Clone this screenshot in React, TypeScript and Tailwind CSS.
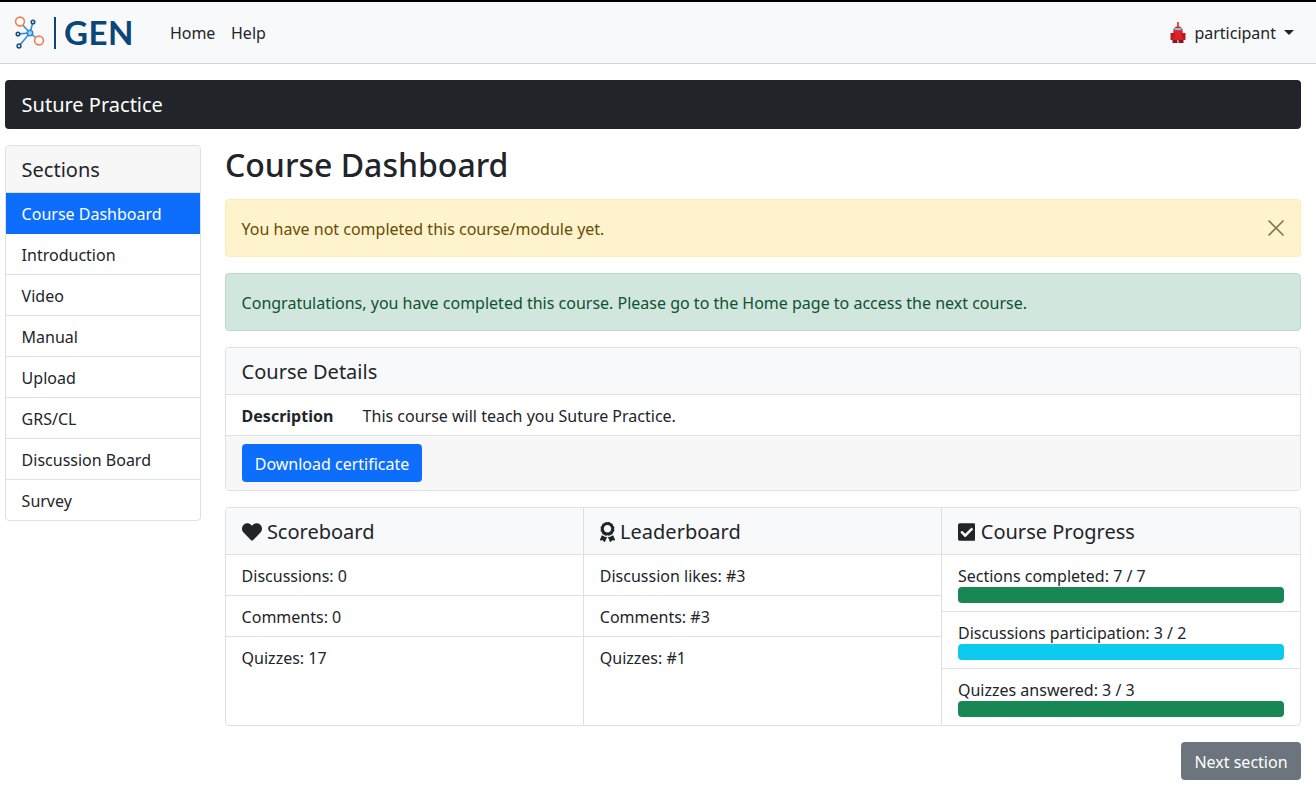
// Course dashboard page

import React from 'react';
import { FaAward, FaCheckSquare, FaHeart } from 'react-icons/fa';

const sections = ['Course Dashboard', 'Introduction', 'Video', 'Manual', 'Upload', 'GRS/CL', 'Discussion Board', 'Survey'];

const Logo: React.FC = () => (
  <div className="flex items-center">
    <svg width="32" height="34" viewBox="0 0 32 34" fill="none">
      <g stroke="#2d8cd6" strokeWidth="1.5">
        <line x1="16" y1="17" x2="6" y2="6" />
        <line x1="16" y1="17" x2="19" y2="6" />
        <line x1="16" y1="17" x2="4" y2="18" />
        <line x1="16" y1="17" x2="5" y2="30" />
        <line x1="16" y1="17" x2="25" y2="24" />
      </g>
      <circle cx="16" cy="17" r="2.7" fill="#a9d4f2" stroke="#2d8cd6" strokeWidth="1.6" />
      <circle cx="6" cy="5.5" r="4.4" fill="#fff" stroke="#f08055" strokeWidth="1.6" />
      <circle cx="25" cy="24.5" r="4.4" fill="#fff" stroke="#f08055" strokeWidth="1.6" />
      <circle cx="19" cy="6" r="1.8" fill="#dceaf5" stroke="#17507f" strokeWidth="1.5" />
      <circle cx="4" cy="18" r="1.8" fill="#dceaf5" stroke="#17507f" strokeWidth="1.5" />
      <circle cx="5" cy="30" r="1.9" fill="#dceaf5" stroke="#17507f" strokeWidth="1.5" />
    </svg>
    <div className="ml-[8px] h-[32px] w-[2px] bg-[#0b4678]" />
    <span className="ml-[8px] font-['Lato',sans-serif] text-[33px] leading-none font-bold tracking-[0.5px] text-[#0b4678]">GEN</span>
  </div>
);

const Robot: React.FC = () => (
  <svg width="16" height="21" viewBox="0 0 16 21">
    <rect x="7" y="0" width="2" height="4" fill="#d9534f" />
    <path d="M3.5 7 Q8 1 12.5 7 L13 15 L3 15 Z" fill="#dc2128" />
    <rect x="4.5" y="6" width="7" height="2.2" fill="#7fc3d6" />
    <rect x="0.5" y="11" width="4" height="7" fill="#b81b20" />
    <rect x="11.5" y="11" width="4" height="7" fill="#b81b20" />
    <rect x="3" y="15" width="10" height="3" fill="#d3202a" />
    <rect x="2.5" y="18" width="5" height="3" fill="#8c1518" />
    <rect x="8.5" y="18" width="5" height="3" fill="#8c1518" />
  </svg>
);

const Card: React.FC<{ title: React.ReactNode; className?: string; children: React.ReactNode }> = ({ title, className, children }) => (
  <div className={className}>
    <div className="h-[47px] border-b border-[#dfe0e1] bg-[#f8f9fa] px-[15.6px] text-[20px] leading-[47px] text-[#212529]">{title}</div>
    {children}
  </div>
);

const Row: React.FC<{ text: string; last?: boolean }> = ({ text, last }) => (
  <div className={`h-[41px] px-[15.6px] leading-[43px] ${last ? '' : 'border-b border-[#dfe0e1]'}`}>{text}</div>
);

const Progress: React.FC<{ text: string; color: string; last?: boolean }> = ({ text, color, last }) => (
  <div className={`h-[57px] px-[15.6px] pt-[8px] ${last ? '' : 'border-b border-[#dfe0e1]'}`}>
    <div className="h-[24px] leading-[26px]">{text}</div>
    <div className={`h-[16px] rounded-[4px] ${color}`} />
  </div>
);

export default function App() {
  return (
    <div className="h-[791px] overflow-hidden bg-white font-['Noto_Sans',sans-serif] text-[16px] text-[#212529]">
      {/* Navbar */}
      <nav className="flex h-[64px] items-center border-t-2 border-b border-t-black border-b-[#d4d5d6] bg-[#f8f9fa] pr-[22px] pl-[14px]">
        <Logo />
        <a className="ml-[36px]">Home</a>
        <a className="ml-[15.6px]">Help</a>
        <div className="ml-auto flex items-center">
          <Robot />
          <span className="ml-[8px]">participant</span>
          <span className="ml-[8px] h-0 w-0 border-x-[5px] border-t-[5px] border-x-transparent border-t-[#212529]" />
        </div>
      </nav>

      <div className="mr-[15px] ml-[5px]">
        {/* Course title */}
        <div className="mt-[16px] h-[49px] rounded-[4px] bg-[#212529] px-[16.6px] text-[20px] leading-[49px] text-white">Suture Practice</div>

        <div className="mt-[16px] flex gap-[24px]">
          {/* Sidebar */}
          <aside className="w-[196px] shrink-0 self-start overflow-hidden rounded-[4px] border border-[#dfe0e1]">
            <div className="h-[47px] border-b border-[#dfe0e1] bg-[#f7f7f7] px-[15.6px] text-[20px] leading-[47px]">Sections</div>
            {sections.map((name, i) => (
              <div
                key={name}
                className={
                  i === 0
                    ? 'h-[41px] bg-[#0d6efd] px-[15.6px] leading-[43px] text-white'
                    : i < sections.length - 1
                      ? 'h-[41px] border-b border-[#dfe0e1] px-[15.6px] leading-[43px]'
                      : 'h-[40px] px-[15.6px] leading-[43px]'
                }
              >
                {name}
              </div>
            ))}
          </aside>

          {/* Main column */}
          <main className="min-w-0 flex-1">
            <h1 className="h-[38px] text-[32px] leading-[40px] font-medium">Course Dashboard</h1>

            <div className="mt-[16px] flex h-[58px] items-center justify-between rounded-[4px] border border-[#ffecb5] bg-[#fff3cd] pr-[15px] pl-[15.6px] text-[#664d03]">
              <span className="pt-[2px]">You have not completed this course/module yet.</span>
              <svg width="18" height="18" viewBox="0 0 18 18" stroke="#85775a" strokeWidth="1.7">
                <line x1="1.5" y1="1.5" x2="16.5" y2="16.5" />
                <line x1="16.5" y1="1.5" x2="1.5" y2="16.5" />
              </svg>
            </div>

            <div className="mt-[16px] flex h-[58px] items-center rounded-[4px] border border-[#badbcc] bg-[#d1e7dd] px-[15.6px] pt-[2px] text-[#0f5132]">
              Congratulations, you have completed this course. Please go to the Home page to access the next course.
            </div>

            {/* Course details */}
            <div className="mt-[16px] overflow-hidden rounded-[4px] border border-[#dfe0e1]">
              <div className="h-[47px] border-b border-[#dfe0e1] bg-[#f8f9fa] px-[15.6px] text-[20px] leading-[47px]">Course Details</div>
              <div className="flex h-[41px] items-center border-b border-[#dfe0e1] px-[15.6px] pt-[2px]">
                <b className="w-[121px] font-bold">Description</b>
                <span>This course will teach you Suture Practice.</span>
              </div>
              <div className="flex h-[54px] items-center bg-[#f7f7f7] px-4">
                <button className="h-[38px] w-[180px] rounded-[4px] bg-[#0d6efd] pt-[2px] text-center text-white">Download certificate</button>
              </div>
            </div>

            {/* Stats */}
            <div className="mt-[16px] grid h-[219px] grid-cols-[358.2px_358.2px_1fr] overflow-hidden rounded-[4px] border border-[#dfe0e1]">
              <Card
                className="border-r border-[#dfe0e1]"
                title={
                  <span className="flex items-center gap-[5.3px]">
                    <FaHeart className="h-[20px] w-[20px]" /> Scoreboard
                  </span>
                }
              >
                <Row text="Discussions: 0" />
                <Row text="Comments: 0" />
                <Row text="Quizzes: 17" last />
              </Card>
              <Card
                className="border-r border-[#dfe0e1]"
                title={
                  <span className="flex items-center gap-[5.3px]">
                    <FaAward className="h-[20px] w-[15px]" /> Leaderboard
                  </span>
                }
              >
                <Row text="Discussion likes: #3" />
                <Row text="Comments: #3" />
                <Row text="Quizzes: #1" last />
              </Card>
              <Card
                title={
                  <span className="flex items-center gap-[5.3px]">
                    <FaCheckSquare className="h-[20px] w-[17.5px]" /> Course Progress
                  </span>
                }
              >
                <Progress text="Sections completed: 7 / 7" color="bg-[#198754]" />
                <Progress text="Discussions participation: 3 / 2" color="bg-[#0dcaf0]" />
                <Progress text="Quizzes answered: 3 / 3" color="bg-[#198754]" last />
              </Card>
            </div>

            <div className="mt-[16px] flex justify-end">
              <button className="h-[38px] w-[120px] rounded-[4px] bg-[#6c757d] pt-[2px] text-center text-white">Next section</button>
            </div>
          </main>
        </div>
      </div>
    </div>
  );
}
